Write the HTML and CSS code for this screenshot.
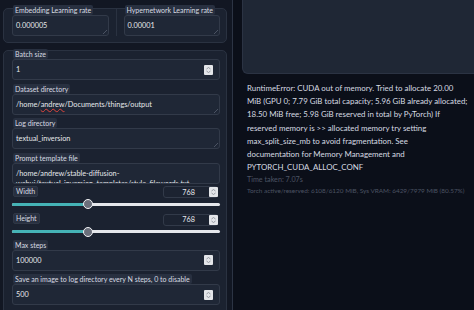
FILE: index.html
```html
<!DOCTYPE html>
<html lang="en">
<head>
    <meta charset="UTF-8">
    <title>Textual inversion - train</title>
    <link rel="stylesheet" href="styles.css">
</head>
<body>
    <div class="page">
        <div class="left-col">
            <div class="group group-top">
                <div class="field">
                    <span class="label">Embedding Learning rate</span>
                    <div class="input resizable">0.000005</div>
                </div>
                <div class="divider"></div>
                <div class="field">
                    <span class="label">Hypernetwork Learning rate</span>
                    <div class="input resizable">0.00001</div>
                </div>
            </div>

            <div class="group group-main">
                <div class="field">
                    <span class="label">Batch size</span>
                    <div class="input">1
                        <svg class="spin" width="9" height="10" viewBox="0 0 9 10"><rect width="9" height="10" rx="1" fill="#e3e5e9"/><path d="M2.5 4L4.5 2.5L6.5 4M2.5 6L4.5 7.5L6.5 6" fill="none" stroke="#8b9099" stroke-width="0.9"/></svg>
                    </div>
                </div>
                <div class="field">
                    <span class="label">Dataset directory</span>
                    <div class="input resizable">/home/<span class="typo">andrew</span>/Documents/things/output</div>
                </div>
                <div class="field">
                    <span class="label">Log directory</span>
                    <div class="input resizable">textual_inversion</div>
                </div>
                <div class="field">
                    <span class="label">Prompt template file</span>
                    <div class="input multiline">/home/andrew/stable-diffusion-webui/textual_inversion_templates/style_filewords.txt</div>
                </div>

                <div class="slider-field first-slider">
                    <div class="slider-head">
                        <span class="label">Width</span>
                        <div class="num-box">768
                            <svg class="spin" width="9" height="10" viewBox="0 0 9 10"><rect width="9" height="10" rx="1" fill="#e3e5e9"/><path d="M2.5 4L4.5 2.5L6.5 4M2.5 6L4.5 7.5L6.5 6" fill="none" stroke="#8b9099" stroke-width="0.9"/></svg>
                        </div>
                    </div>
                    <div class="slider">
                        <div class="track"><div class="fill" style="width: 36.4%"></div><div class="thumb" style="left: 36.4%"></div></div>
                    </div>
                </div>
                <div class="slider-field">
                    <div class="slider-head">
                        <span class="label">Height</span>
                        <div class="num-box">768
                            <svg class="spin" width="9" height="10" viewBox="0 0 9 10"><rect width="9" height="10" rx="1" fill="#e3e5e9"/><path d="M2.5 4L4.5 2.5L6.5 4M2.5 6L4.5 7.5L6.5 6" fill="none" stroke="#8b9099" stroke-width="0.9"/></svg>
                        </div>
                    </div>
                    <div class="slider">
                        <div class="track"><div class="fill" style="width: 36.4%"></div><div class="thumb" style="left: 36.4%"></div></div>
                    </div>
                </div>

                <div class="field after-slider">
                    <span class="label">Max steps</span>
                    <div class="input">100000
                        <svg class="spin" width="9" height="10" viewBox="0 0 9 10"><rect width="9" height="10" rx="1" fill="#e3e5e9"/><path d="M2.5 4L4.5 2.5L6.5 4M2.5 6L4.5 7.5L6.5 6" fill="none" stroke="#8b9099" stroke-width="0.9"/></svg>
                    </div>
                </div>
                <div class="field">
                    <span class="label">Save an image to log directory every N steps, 0 to disable</span>
                    <div class="input">500
                        <svg class="spin" width="9" height="10" viewBox="0 0 9 10"><rect width="9" height="10" rx="1" fill="#e3e5e9"/><path d="M2.5 4L4.5 2.5L6.5 4M2.5 6L4.5 7.5L6.5 6" fill="none" stroke="#8b9099" stroke-width="0.9"/></svg>
                    </div>
                </div>
            </div>
        </div>

        <div class="right-col">
            <div class="gallery"></div>
            <div class="output">
                <p class="error">RuntimeError: CUDA out of memory. Tried to allocate 20.00<br>MiB (GPU 0; 7.79 GiB total capacity; 5.96 GiB already allocated;<br>18.50 MiB free; 5.98 GiB reserved in total by PyTorch) If<br>reserved memory is &gt;&gt; allocated memory try setting<br>max_split_size_mb to avoid fragmentation. See<br>documentation for Memory Management and<br>PYTORCH_CUDA_ALLOC_CONF</p>
                <p class="time">Time taken: 7.07s</p>
                <p class="vram">Torch active/reserved: 6108/6120 MiB, Sys VRAM: 6429/7979 MiB (80.57%)</p>
            </div>
        </div>
    </div>
</body>
</html>
```

FILE: styles.css
```css
body {
    margin: 0;
    background-color: #0b0f19;
    font-family: 'Lato', 'Liberation Sans', sans-serif;
    overflow: hidden;
}
.page {
    display: flex;
    height: 310px;
    overflow: hidden;
}
.left-col {
    flex: 0 0 auto;
    width: 229px;
    padding-left: 3px;
    background-color: #121723;
    border-right: 1px solid #2c3444;
    display: flex;
    flex-direction: column;
    gap: 7px;
}
.right-col {
    flex: 1;
    min-width: 0;
    margin-left: 9px;
}
.group {
    width: 224px;
    box-sizing: border-box;
    background-color: #1b2230;
    border: 1px solid #2a3241;
    border-radius: 5px;
    padding: 0 6px 6px 8px;
}
.group-top {
    margin-top: 8px;
    display: flex;
    gap: 7px;
}
.group-top .field {
    flex: 1;
    margin-top: -4px;
}
.divider {
    width: 1px;
    background-color: #2a3241;
}
.group-main {
    display: flex;
    flex-direction: column;
    gap: 3.5px;
    padding-bottom: 20px;
}
.group-main > .field:first-child {
    margin-top: -2px;
}
.field {
    display: flex;
    flex-direction: column;
    min-width: 0;
}
.after-slider {
    margin-top: -1px;
}
.label {
    align-self: flex-start;
    height: 10px;
    line-height: 10px;
    font-size: 7px;
    padding: 0 2px;
    margin-left: 1px;
    background-color: #283040;
    color: #d8dce2;
    border-radius: 2px;
    white-space: nowrap;
}
.slider-head .label {
    border: 1px solid #2f3746;
    height: 9px;
    line-height: 9px;
}
.input {
    position: relative;
    height: 21px;
    box-sizing: border-box;
    background-color: #1f2736;
    border: 1px solid #323a49;
    border-radius: 3px;
    padding: 0 6px 0 3px;
    font-size: 7.3px;
    color: #e5e7eb;
    display: flex;
    align-items: center;
    white-space: nowrap;
    overflow: hidden;
}
.input .spin {
    margin-left: auto;
}
.resizable::after {
    content: '';
    position: absolute;
    right: 1px;
    bottom: 1px;
    width: 4px;
    height: 4px;
    background: linear-gradient(135deg, transparent 45%, #4b5363 45%, #4b5363 60%, transparent 60%);
}
.multiline {
    align-items: flex-start;
    white-space: normal;
    line-height: 10px;
    padding-top: 5px;
}
.typo {
    text-decoration: underline wavy #e0453c;
    text-decoration-thickness: 1px;
    text-underline-offset: 1px;
}
.slider-field {
    display: flex;
    flex-direction: column;
}
.first-slider {
    margin-top: -1.5px;
}
.slider-head {
    height: 13px;
    display: flex;
    align-items: center;
    justify-content: space-between;
}
.num-box {
    width: 55px;
    height: 12px;
    box-sizing: border-box;
    margin-right: 2px;
    border: 1px solid #323a49;
    border-radius: 3px;
    background-color: #1c2331;
    font-size: 7.3px;
    color: #e5e7eb;
    display: flex;
    align-items: center;
    justify-content: flex-end;
    gap: 14px;
}
.num-box .spin {
    margin-right: -1px;
}
.slider {
    height: 11px;
    display: flex;
    align-items: center;
}
.track {
    position: relative;
    flex: 1;
    height: 3px;
    background-color: #e5e7eb;
    border-radius: 2px;
}
.fill {
    height: 100%;
    background-color: #45b3b6;
    border-radius: 2px 0 0 2px;
}
.thumb {
    position: absolute;
    top: 50%;
    width: 10px;
    height: 10px;
    box-sizing: border-box;
    border-radius: 50%;
    background-color: #6b6f7b;
    border: 1.5px solid #f3f4f6;
    transform: translate(-50%, -50%);
}
.gallery {
    height: 73px;
    background-color: #1f2735;
    border-left: 1px solid #2b3343;
    border-bottom: 1px solid #2b3343;
    border-radius: 0 0 0 6px;
}
.output {
    padding: 8px 0 0 5px;
}
.output p {
    margin: 0;
}
.error {
    font-size: 7.9px;
    line-height: 13.2px;
    color: #d7dbe2;
    white-space: nowrap;
}
.time {
    font-size: 7.2px;
    line-height: 11px;
    color: #4b5363;
    margin-top: 1px;
}
.vram {
    font-size: 6.4px;
    line-height: 11px;
    color: #4b5363;
    white-space: nowrap;
}
```
